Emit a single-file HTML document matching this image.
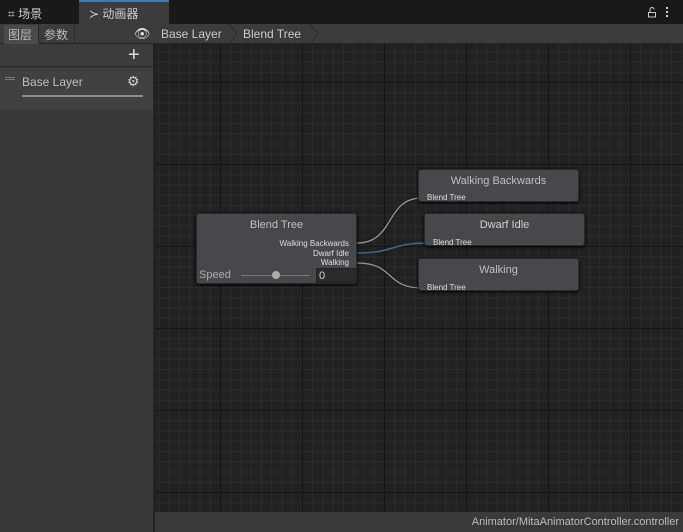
<!DOCTYPE html><html><head><meta charset="utf-8"><style>
*{margin:0;padding:0;box-sizing:border-box}
body{width:683px;height:532px;background:#191919;font-family:"Liberation Sans","Noto Sans CJK SC",sans-serif;position:relative;overflow:hidden;color:#c4c4c4}
.a{position:absolute}
.grid{left:155px;top:44px;width:528px;height:468px;background-color:#212121;
background-image:linear-gradient(#151515 1px,transparent 1px),linear-gradient(90deg,#151515 1px,transparent 1px),linear-gradient(#2b2b2b 1px,transparent 1px),linear-gradient(90deg,#2b2b2b 1px,transparent 1px);
background-size:82px 82px,82px 82px,10.25px 10.25px,10.25px 10.25px;background-position:0 38px,65px 0,0 38px,65px 0}
.node{background:#46484b;border-radius:3px;box-shadow:0 1px 3px #000;border:1px solid #2a2a2a}
.t{font-size:11px;color:#bfbfbf;text-align:center}
.s{font-size:8px;color:#ddd}
</style></head><body>
<div class="a" style="left:0;top:0;width:683px;height:24px;background:#191919"></div>
<div class="a" style="left:8px;top:5px;font-size:12px;color:#ccc">⌗ 场景</div>
<div class="a" style="left:79px;top:0;width:90px;height:24px;background:#3c3c3c;border-top:2px solid #3a79bb"></div>
<div class="a" style="left:89px;top:5px;font-size:12px;color:#ccc">≻ 动画器</div>
<svg class="a" style="left:646px;top:6px" width="30" height="12"><path d="M2.5 11V6.5h7V11z M4 6.5V3.5a2 2 0 0 1 4 0" stroke="#ccc" fill="none" stroke-width="1"/><rect x="20" y="1" width="2" height="2" fill="#ccc"/><rect x="20" y="5" width="2" height="2" fill="#ccc"/><rect x="20" y="9" width="2" height="2" fill="#ccc"/></svg>
<div class="a" style="left:0;top:24px;width:683px;height:20px;background:#3c3c3c;border-bottom:1px solid #232323"></div>
<div class="a" style="left:4px;top:25px;width:35px;height:19px;background:#4a4a4a;border-right:1px solid #2a2a2a;font-size:12px;color:#bbb;padding:1px 4px">图层</div>
<div class="a" style="left:44px;top:26px;font-size:12px;color:#bbb">参数</div>
<div class="a" style="left:74px;top:24px;width:1px;height:20px;background:#2a2a2a"></div>
<div class="a" style="left:134px;top:26px;font-size:13px;color:#ddd">👁</div>
<div class="a" style="left:161px;top:27px;font-size:12px;color:#c8c8c8">Base Layer</div>
<div class="a" style="left:243px;top:27px;font-size:12px;color:#c8c8c8">Blend Tree</div>
<svg class="a" style="left:228px;top:24px" width="100" height="20"><path d="M1 0L9 10L1 20" stroke="#2c2c2c" fill="none"/><path d="M82 0L90 10L82 20" stroke="#2c2c2c" fill="none"/></svg>
<div class="a" style="left:0;top:44px;width:153px;height:488px;background:#383838"></div>
<div class="a" style="left:0;top:44px;width:153px;height:23px;background:#3c3c3c;border-bottom:1px solid #2a2a2a"></div>
<div class="a" style="left:128px;top:44px;font-size:20px;color:#ddd">+</div>
<div class="a" style="left:0;top:68px;width:153px;height:42px;background:#404040"></div>
<div class="a" style="left:5px;top:77px;width:10px;height:3px;border-top:1px solid #777;border-bottom:1px solid #777"></div>
<div class="a" style="left:22px;top:75px;font-size:12px;color:#bbb">Base Layer</div>
<div class="a" style="left:127px;top:73px;font-size:14px;color:#ccc">⚙</div>
<div class="a" style="left:22px;top:95px;width:121px;height:2px;background:#8a8a8a"></div>
<div class="a" style="left:153px;top:44px;width:2px;height:488px;background:#222"></div>
<div class="a grid"></div>
<svg class="a" style="left:0;top:0" width="683" height="532">
<path d="M357 243 C395 243 385 198 422 198" stroke="#999" fill="none" stroke-width="1.2"/>
<path d="M357 253 C395 253 390 243 428 243" stroke="#3f6890" fill="none" stroke-width="1.5"/>
<path d="M357 263 C395 263 385 288 422 288" stroke="#999" fill="none" stroke-width="1.2"/>
</svg>
<div class="a node" style="left:196px;top:213px;width:161px;height:71px"></div>
<div class="a t" style="left:196px;top:219px;width:161px">Blend Tree</div>
<div class="a s" style="left:196px;top:239px;width:153px;text-align:right;line-height:9.5px">Walking Backwards<br>Dwarf Idle<br>Walking</div>
<div class="a" style="left:199px;top:269px;font-size:11px;color:#aaa">Speed</div>
<div class="a" style="left:241px;top:275px;width:69px;height:1px;background:#777"></div>
<div class="a" style="left:272px;top:271px;width:8px;height:8px;border-radius:50%;background:#aaa"></div>
<div class="a" style="left:316px;top:268px;width:40px;height:15px;background:#2a2a2a;border:1px solid #222;font-size:11px;padding:1px 2px;color:#ccc">0</div>
<div class="a node" style="left:418px;top:169px;width:161px;height:33px"></div>
<div class="a t" style="left:418px;top:175px;width:161px">Walking Backwards</div>
<div class="a s" style="left:427px;top:193px">Blend Tree</div>
<div class="a node" style="left:424px;top:213px;width:161px;height:33px"></div>
<div class="a t" style="left:424px;top:219px;width:161px;color:#d0d0d0">Dwarf Idle</div>
<div class="a s" style="left:433px;top:238px">Blend Tree</div>
<div class="a node" style="left:418px;top:258px;width:161px;height:33px"></div>
<div class="a t" style="left:418px;top:264px;width:161px">Walking</div>
<div class="a s" style="left:427px;top:283px">Blend Tree</div>
<div class="a" style="left:155px;top:512px;width:528px;height:20px;background:#3a3a3a"></div>
<div class="a" style="right:4px;top:516px;font-size:11px;color:#bbb">Animator/MitaAnimatorController.controller</div>
</body></html>
